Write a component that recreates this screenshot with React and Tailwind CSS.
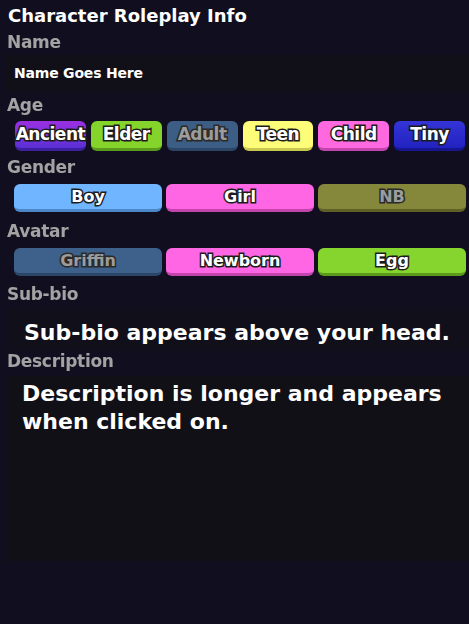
import React from 'react';

const outline = 'text-white [-webkit-text-stroke:3px_#1c1c1c] [paint-order:stroke_fill]';
const outlineDim = 'text-[#9c9c9c] [-webkit-text-stroke:3px_#2a2a2a] [paint-order:stroke_fill]';

function Label({ children }) {
  return (
    <div className="text-[17px] leading-[20px] font-bold text-[#a3a3a3] blur-[0.6px] pl-[7px] tracking-[-0.3px]">
      {children}
    </div>
  );
}

function Chip({ label, bg, edge, dim, className }) {
  return (
    <div
      className={`flex items-center justify-center rounded-md border-b-[3px] ${bg} ${edge} ${className}`}
    >
      <span className={`font-bold ${dim ? outlineDim : outline}`}>{label}</span>
    </div>
  );
}

const ages = [
  { label: 'Ancient', bg: 'bg-gradient-to-b from-[#9b2fe0] via-[#7c32e0] to-[#5a2fd4]', edge: 'border-[#3d1fa0]' },
  { label: 'Elder', bg: 'bg-[#84d42c]', edge: 'border-[#5a9a1c]' },
  { label: 'Adult', bg: 'bg-[#3c5d84]', edge: 'border-[#2c4668]', dim: true },
  { label: 'Teen', bg: 'bg-[#fdfd7a]', edge: 'border-[#c8c84e]' },
  { label: 'Child', bg: 'bg-[#ff69df]', edge: 'border-[#c444ad]' },
  { label: 'Tiny', bg: 'bg-gradient-to-b from-[#3434d8] to-[#2222c0]', edge: 'border-[#161690]' },
];

const genders = [
  { label: 'Boy', bg: 'bg-[#6fb5ff]', edge: 'border-[#4c88c8]' },
  { label: 'Girl', bg: 'bg-[#ff66e4]', edge: 'border-[#c444ae]' },
  { label: 'NB', bg: 'bg-[#85873a]', edge: 'border-[#5e6026]', dim: true },
];

const avatars = [
  { label: 'Griffin', bg: 'bg-[#3d618a]', edge: 'border-[#2b4666]', dim: true },
  { label: 'Newborn', bg: 'bg-[#ff66e4]', edge: 'border-[#c444ae]' },
  { label: 'Egg', bg: 'bg-[#86d42e]', edge: 'border-[#5c9a1c]' },
];

export default function App() {
  return (
    <div className="w-[469px] h-[624px] overflow-hidden bg-[#110f1f] font-['DejaVu_Sans','Noto_Sans',sans-serif]">
      {/* Title */}
      <h1 className="pl-[8px] pt-[4px] text-[18px] leading-[24px] font-bold text-white">
        Character Roleplay Info
      </h1>

      {/* Name */}
      <div className="mt-[4px]">
        <Label>Name</Label>
        <div className="ml-[5px] mt-[3px] h-[37px] bg-[#111019] flex items-center pl-[9px]">
          <span className="text-[14px] font-bold text-white tracking-[-0.2px]">Name Goes Here</span>
        </div>
      </div>

      {/* Age */}
      <div className="mt-[3px]">
        <Label>Age</Label>
        <div className="mt-[6px] pl-[15px] pr-[4px] grid grid-cols-6 gap-[5px]">
          {ages.map((a) => (
            <Chip key={a.label} {...a} className="h-[30px] text-[17px] tracking-[-0.5px]" />
          ))}
        </div>
      </div>

      {/* Gender */}
      <div className="mt-[6px]">
        <Label>Gender</Label>
        <div className="mt-[7px] pl-[14px] pr-[3px] grid grid-cols-3 gap-[4px]">
          {genders.map((g) => (
            <Chip key={g.label} {...g} className="h-[28px] text-[16px]" />
          ))}
        </div>
      </div>

      {/* Avatar */}
      <div className="mt-[9px]">
        <Label>Avatar</Label>
        <div className="mt-[7px] pl-[14px] pr-[3px] grid grid-cols-3 gap-[4px]">
          {avatars.map((g) => (
            <Chip key={g.label} {...g} className="h-[28px] text-[16px]" />
          ))}
        </div>
      </div>

      {/* Sub-bio */}
      <div className="mt-[8px]">
        <Label>Sub-bio</Label>
        <div className="ml-[8px] mt-[5px] h-[42px] bg-[#100f1a] flex items-center pl-[16px] pt-[4px]">
          <span className="text-[22px] font-bold text-white">Sub-bio appears above your head.</span>
        </div>
      </div>

      {/* Description */}
      <div className="mt-[0px]">
        <Label>Description</Label>
        <div className="ml-[8px] mt-[5px] h-[185px] bg-[#101016] pl-[14px] pt-[4px] pr-[10px]">
          <p className="text-[22px] leading-[28px] font-bold text-white">
            Description is longer and appears when clicked on.
          </p>
        </div>
      </div>
    </div>
  );
}
